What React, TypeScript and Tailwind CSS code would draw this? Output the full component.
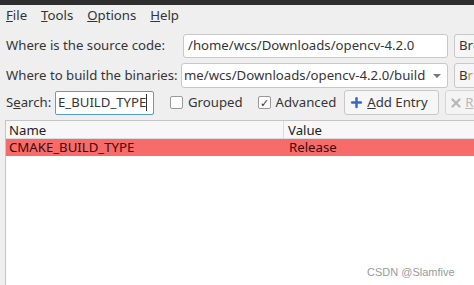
import { Plus, X } from "lucide-react";

export default function App() {
  return (
    <div
      className="w-[474px] h-[285px] overflow-hidden bg-[#efefef] text-[13.2px] text-[#353535] relative whitespace-nowrap"
      style={{ fontFamily: '"Noto Sans", "Open Sans", sans-serif' }}
    >
      {/* Title strip */}
      <div className="h-[5px] bg-[#2e2e2e]" />

      {/* Menu bar */}
      <div className="h-[22px] flex items-center gap-[14px] px-[6px] text-[#333]">
        <span><u>F</u>ile</span>
        <span><u>T</u>ools</span>
        <span><u>O</u>ptions</span>
        <span><u>H</u>elp</span>
      </div>

      {/* Source row */}
      <div className="flex items-center mt-[7px] h-[24px] pl-[6px]">
        <span className="w-[177px] shrink-0">Where is the source code:</span>
        <div className="w-[265px] shrink-0 h-[24px] bg-white border border-[#c8c8c8] rounded-[3px] flex items-center px-[4px] overflow-hidden">
          /home/wcs/Downloads/opencv-4.2.0
        </div>
        <div className="ml-[6px] w-[40px] shrink-0 h-[24px] bg-[#f6f6f6] border border-[#c8c8c8] rounded-[3px] flex items-center px-[4px] overflow-hidden">
          Br<span className="text-[#e08a2a]">o</span>
        </div>
      </div>

      {/* Build row */}
      <div className="flex items-center mt-[5px] h-[25px] pl-[6px]">
        <span className="w-[175px] shrink-0">Where to build the binaries:</span>
        <div className="w-[267px] shrink-0 h-[25px] bg-white border border-[#c8c8c8] rounded-[3px] flex items-center px-[2px] overflow-hidden relative">
          <span>me/wcs/Downloads/opencv-4.2.0/build</span>
          <span className="absolute right-[6px] top-[10px] w-0 h-0 border-l-[4px] border-r-[4px] border-t-[4px] border-l-transparent border-r-transparent border-t-[#777]" />
        </div>
        <div className="ml-[6px] w-[40px] shrink-0 h-[25px] bg-[#f6f6f6] border border-[#c8c8c8] rounded-[3px] flex items-center px-[4px] overflow-hidden">
          B<span className="text-[#e08a2a]">r</span>
        </div>
      </div>

      {/* Search row */}
      <div className="flex items-center mt-[2px] h-[25px] pl-[6px]">
        <span className="w-[49px] shrink-0">S<u>e</u>arch:</span>
        <div className="w-[99px] shrink-0 h-[24px] bg-white border border-[#5b9ad6] rounded-[2px] flex items-center px-[2px] overflow-hidden">
          E_BUILD_TYPE<span className="w-px h-[17px] bg-[#333]" />
        </div>
        <div className="ml-[16px] shrink-0 w-[13px] h-[13px] bg-white border border-[#9a9a9a] rounded-[2px]" />
        <span className="ml-[5px]">Grouped</span>
        <div className="ml-[15px] shrink-0 w-[13px] h-[13px] bg-white border border-[#9a9a9a] rounded-[2px] flex items-center justify-center text-[11px] leading-none text-[#333]">
          ✓
        </div>
        <span className="ml-[5px]">Advanced</span>
        <div className="ml-[8px] shrink-0 w-[95px] h-[25px] bg-[#f6f6f6] border border-[#c8c8c8] rounded-[3px] flex items-center gap-[3px] px-[4px]">
          <Plus className="w-[15px] h-[15px] text-[#3a66c8] shrink-0" strokeWidth={4} />
          <span><u>A</u>dd Entry</span>
        </div>
        <div className="ml-[6px] shrink-0 w-[40px] h-[25px] bg-[#f4f4f4] border border-[#d6d6d6] rounded-[3px] flex items-center gap-[2px] px-[3px] text-[#b8b8b8] overflow-hidden">
          <X className="w-[14px] h-[14px] shrink-0" strokeWidth={4} />
          <span><u>R</u>e</span>
        </div>
      </div>

      {/* Table */}
      <div className="mt-[5px] ml-[5px] h-[200px] bg-white border-l border-t border-[#c4c4c4]">
        <div className="flex h-[18px] bg-[#f7f7f7] border-b border-[#dcdcdc] text-[#222]">
          <div className="w-[278px] pl-[3px] border-r border-[#dcdcdc] leading-[18px]">Name</div>
          <div className="pl-[4px] leading-[18px]">Value</div>
        </div>
        <div className="flex h-[17px] bg-[#f86b6b] text-[#3a0a0a]">
          <div className="w-[278px] pl-[3px] leading-[17px]">CMAKE_BUILD_TYPE</div>
          <div className="pl-[5px] leading-[17px]">Release</div>
        </div>
      </div>

      {/* Watermark */}
      <div
        className="absolute left-[367px] top-[264px] text-[11px] text-[#9a9a9a]"
        style={{ fontFamily: '"Liberation Sans", Arial, sans-serif' }}
      >
        CSDN @Slamfive
      </div>
    </div>
  );
}
